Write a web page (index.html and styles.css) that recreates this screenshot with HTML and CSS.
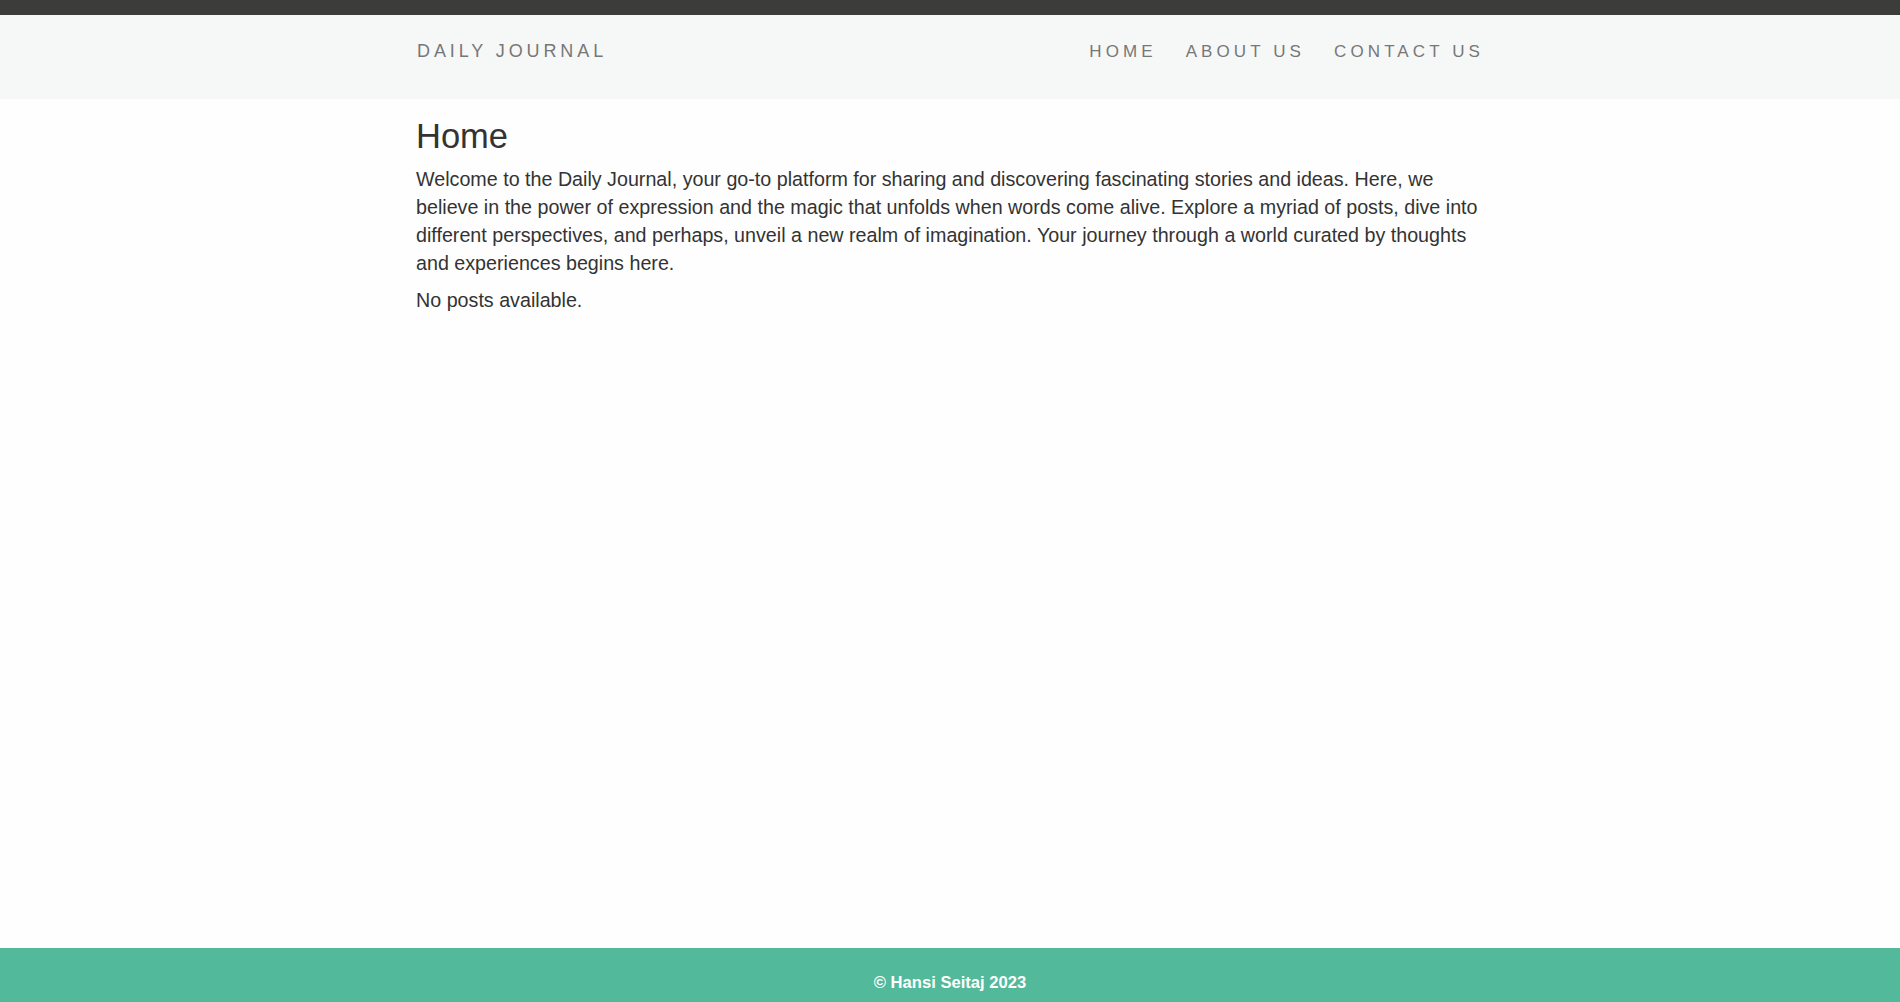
FILE: index.html
```html
<!DOCTYPE html>
<html lang="en">
<head>
<meta charset="utf-8">
<title>Daily Journal</title>
<link rel="stylesheet" href="styles.css">
</head>
<body>
  <div class="topbar"></div>
  <header class="navbar">
    <div class="container nav-row">
      <a class="brand" href="#">DAILY JOURNAL</a>
      <ul class="nav-links">
        <li><a href="#">HOME</a></li>
        <li><a href="#">ABOUT US</a></li>
        <li><a href="#">CONTACT US</a></li>
      </ul>
    </div>
  </header>
  <main class="content">
    <div class="container">
      <h1 class="title">Home</h1>
      <p class="text">Welcome to the Daily Journal, your go-to platform for sharing and discovering fascinating stories and ideas. Here, we believe in the power of expression and the magic that unfolds when words come alive. Explore a myriad of posts, dive into different perspectives, and perhaps, unveil a new realm of imagination. Your journey through a world curated by thoughts and experiences begins here.</p>
      <p class="text">No posts available.</p>
    </div>
  </main>
  <footer class="footer">
    <p class="copy">© Hansi Seitaj 2023</p>
  </footer>
</body>
</html>
```
FILE: styles.css
```css
* { box-sizing: border-box; }
html, body { margin: 0; padding: 0; }
body {
  font-family: "Liberation Sans", Arial, sans-serif;
  color: #333333;
  background: #fefefe;
  min-height: 100vh;
  display: flex;
  flex-direction: column;
}
.topbar {
  height: 15px;
  background: #3c3c3a;
}
.container {
  width: 1068px;
  margin: 0 auto;
}
.navbar {
  height: 84px;
  background: #f6f8f7;
  padding-top: 26px;
}
.nav-row {
  display: flex;
  align-items: baseline;
  justify-content: space-between;
}
.brand {
  font-size: 18px;
  line-height: 20px;
  letter-spacing: 3.9px;
  color: #777777;
  text-decoration: none;
  padding-left: 1px;
}
.nav-links {
  list-style: none;
  margin: 0;
  padding: 0;
  display: flex;
  gap: 29px;
}
.nav-links a {
  font-size: 17px;
  line-height: 20px;
  letter-spacing: 4.1px;
  color: #777777;
  text-decoration: none;
}
.content {
  flex: 1;
  padding-top: 16px;
}
.title {
  font-size: 34.5px;
  font-weight: 400;
  line-height: 42px;
  margin: 0 0 8px;
  color: #333333;
}
.text {
  font-size: 19.7px;
  line-height: 28px;
  margin: 0 0 8.7px;
  color: #333333;
}
.footer {
  height: 54px;
  background: #52b99b;
  padding-top: 25px;
  text-align: center;
}
.copy {
  margin: 0;
  font-size: 16.6px;
  line-height: 20px;
  font-weight: 700;
  color: #ffffff;
}
```
